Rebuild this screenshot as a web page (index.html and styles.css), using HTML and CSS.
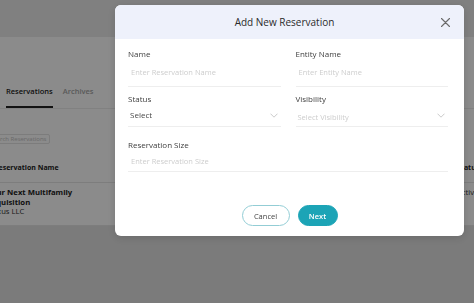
FILE: index.html
```html
<!DOCTYPE html>
<html lang="en">
<head>
<meta charset="utf-8">
<title>Add New Reservation</title>
<link rel="stylesheet" href="styles.css">
</head>
<body>
<div class="page">
  <header class="topbar"></header>
  <main class="content">
    <nav class="tabs">
      <span class="tab tab--active">Reservations</span>
      <span class="tab">Archives</span>
    </nav>
    <div class="search">Search Reservations</div>
    <div class="table">
      <div class="thead">
        <span class="col-name col-name--head">Reservation Name</span>
        <span class="col-status">Status</span>
      </div>
      <div class="trow">
        <div class="col-name col-name--row">
          <div class="res-title">Your Next Multifamily Acquisition</div>
          <div class="res-entity">Nexus LLC</div>
        </div>
        <span class="col-status col-status--row">Active</span>
      </div>
    </div>
  </main>
  <div class="rest"></div>
</div>

<div class="backdrop"></div>

<div class="modal" role="dialog" aria-label="Add New Reservation">
  <div class="modal-header">
    <h2 class="modal-title">Add New Reservation</h2>
    <button class="close-btn" aria-label="Close">
      <svg width="9" height="9" viewBox="0 0 9 9"><path d="M0.5 0.5 L8.5 8.5 M8.5 0.5 L0.5 8.5" stroke="#6b6b6b" stroke-width="1.1" fill="none" stroke-linecap="round"/></svg>
    </button>
  </div>
  <div class="modal-body">
    <div class="form-grid">
      <div class="field">
        <label class="field-label">Name</label>
        <input class="field-input field-input--first" placeholder="Enter Reservation Name">
      </div>
      <div class="field">
        <label class="field-label">Entity Name</label>
        <input class="field-input field-input--first" placeholder="Enter Entity Name">
      </div>
      <div class="field field--row2">
        <label class="field-label">Status</label>
        <div class="select">
          <span class="select-value">Select</span>
          <svg class="chevron" width="8" height="5" viewBox="0 0 8 5"><path d="M0.5 0.7 L4 4.2 L7.5 0.7" stroke="#c4c4c4" stroke-width="0.9" fill="none"/></svg>
        </div>
      </div>
      <div class="field field--row2">
        <label class="field-label">Visibility</label>
        <div class="select select--placeholder">
          <span class="select-value">Select Visibility</span>
          <svg class="chevron" width="8" height="5" viewBox="0 0 8 5"><path d="M0.5 0.7 L4 4.2 L7.5 0.7" stroke="#c4c4c4" stroke-width="0.9" fill="none"/></svg>
        </div>
      </div>
      <div class="field field--wide field--row3">
        <label class="field-label">Reservation Size</label>
        <input class="field-input field-input--last" placeholder="Enter Reservation Size">
      </div>
    </div>
    <div class="modal-actions">
      <button class="btn btn--outline">Cancel</button>
      <button class="btn btn--primary">Next</button>
    </div>
  </div>
</div>
</body>
</html>
```

FILE: styles.css
```css
* { box-sizing: border-box; }

html, body {
  margin: 0;
  padding: 0;
  width: 474px;
  height: 303px;
  overflow: hidden;
  font-family: "Open Sans", "Noto Sans", sans-serif;
  color: #333;
}

.page {
  display: flex;
  flex-direction: column;
  height: 303px;
  overflow: hidden;
}

.topbar {
  height: 37px;
  background: #ebebeb;
  flex: none;
}

.content {
  background: #fff;
  height: 189px;
  flex: none;
  overflow: hidden;
}

.rest {
  flex: 1;
  background: #e2e2e2;
}

.tabs {
  display: flex;
  gap: 10px;
  margin-top: 48px;
  padding-left: 6px;
  border-bottom: 1px solid #ececec;
}

.tab {
  font-size: 7.5px;
  line-height: 12px;
  padding-bottom: 9px;
  color: #a5a5a5;
  font-weight: 600;
  border-bottom: 2px solid transparent;
}

.tab--active {
  color: #222;
  border-bottom-color: #222;
}

.search {
  margin-top: 25px;
  margin-left: -17px;
  width: 67px;
  height: 10px;
  border: 1px solid #e3e3e3;
  border-radius: 2px;
  padding-left: 6px;
  font-size: 6px;
  line-height: 8px;
  color: #c2c2c2;
  white-space: nowrap;
  overflow: hidden;
}

.thead, .trow {
  display: flex;
  border-bottom: 1px solid #e6e6e6;
  white-space: nowrap;
}

.thead {
  margin-top: 19px;
  padding-bottom: 9px;
  font-size: 7px;
  line-height: 10px;
  font-weight: 700;
  color: #222;
}

.col-name--head {
  margin-left: -6px;
  width: 463px;
  flex: none;
}

.trow {
  padding: 5px 0 8px;
  font-size: 7.7px;
  line-height: 9.5px;
  color: #222;
}

.col-name--row {
  margin-left: -13px;
  width: 470px;
  flex: none;
}

.res-title {
  font-weight: 700;
  white-space: normal;
  width: 100px;
}

.res-entity {
  color: #333;
}

.col-status--row {
  color: #333;
}

.backdrop {
  position: fixed;
  inset: 0;
  background: rgba(0, 0, 0, 0.455);
}

.modal {
  position: fixed;
  left: 115px;
  top: 5px;
  width: 349px;
  height: 231px;
  background: #fff;
  border-radius: 6px;
  overflow: hidden;
  box-shadow: 0 2px 8px rgba(0, 0, 0, 0.15);
}

.modal-header {
  height: 34px;
  background: #eef1fb;
  display: flex;
  align-items: center;
  padding: 0 14px 0 13px;
}

.modal-title {
  flex: 1;
  margin: 0;
  text-align: center;
  font-size: 10px;
  font-weight: 500;
  color: #2b2b2b;
  line-height: 14px;
}

.close-btn {
  width: 9px;
  height: 9px;
  padding: 0;
  border: 0;
  background: none;
  display: flex;
}

.modal-body {
  padding: 9px 16px 0 13px;
}

.form-grid {
  display: grid;
  grid-template-columns: 1fr 1fr;
  column-gap: 15px;
}

.field {
  display: flex;
  flex-direction: column;
}

.field--row2 { margin-top: 6px; }
.field--row3 { margin-top: 12px; }
.field--wide { grid-column: 1 / -1; }

.field-label {
  font-size: 8px;
  line-height: 12px;
  color: #404040;
}

.field-input {
  border: 0;
  border-bottom: 1px solid #eeeeee;
  outline: none;
  font-family: inherit;
  font-size: 7.5px;
  line-height: 12px;
  color: #444;
  width: 100%;
  background: transparent;
}

.field-input::placeholder { color: #cdcdcd; }

.field-input--first { padding: 6px 3px 8px; height: 27px; }
.field-input--last { padding: 4px 3px 4px; height: 21px; }

.select {
  display: flex;
  align-items: center;
  justify-content: space-between;
  height: 22px;
  padding: 0 3px 1px 2px;
  border-bottom: 1px solid #eeeeee;
}

.select-value {
  font-size: 8px;
  line-height: 12px;
  color: #4a4a4a;
}

.select--placeholder .select-value {
  font-size: 7.5px;
  color: #cdcdcd;
  margin-top: 3px;
}

.chevron { flex: none; }

.modal-actions {
  display: flex;
  justify-content: center;
  gap: 8px;
  margin-top: 33px;
  padding-left: 3px;
}

.btn {
  height: 21px;
  border-radius: 11px;
  font-family: inherit;
  font-size: 7.5px;
  padding: 0;
  cursor: pointer;
}

.btn--outline {
  width: 48px;
  background: #fff;
  border: 1px solid #93cdd5;
  color: #444;
}

.btn--primary {
  width: 40px;
  background: #1ca4b6;
  border: 1px solid #1ca4b6;
  color: #fff;
  font-weight: 600;
}
```
